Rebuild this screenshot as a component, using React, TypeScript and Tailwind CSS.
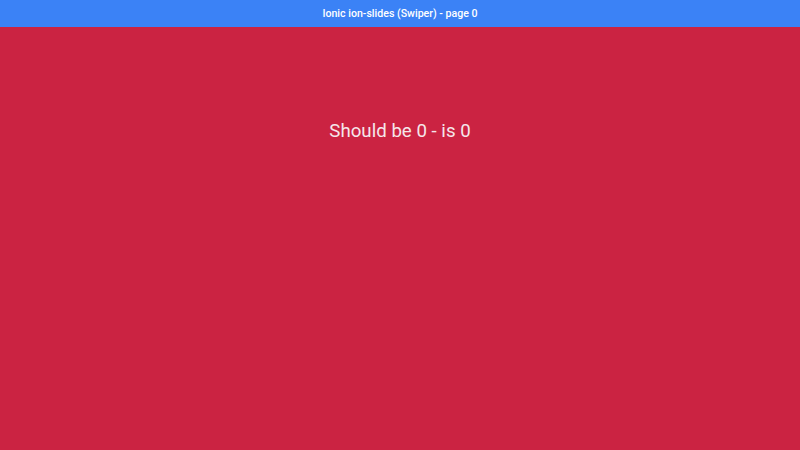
const App = () => {
  return (
    <div className="h-[450px] w-[800px] flex flex-col bg-[#cb2342] font-['Roboto',sans-serif]">
      <header className="h-[27px] bg-[#3b82f6] flex items-center justify-center">
        <span className="text-[10.6px] font-medium text-white">Ionic ion-slides (Swiper) - page 0</span>
      </header>
      <main className="flex-1 flex justify-center pt-[92px]">
        <p className="text-[18.7px] leading-[24px] text-[#f5e6ea]">Should be 0 - is 0</p>
      </main>
    </div>
  );
};

export default App;
